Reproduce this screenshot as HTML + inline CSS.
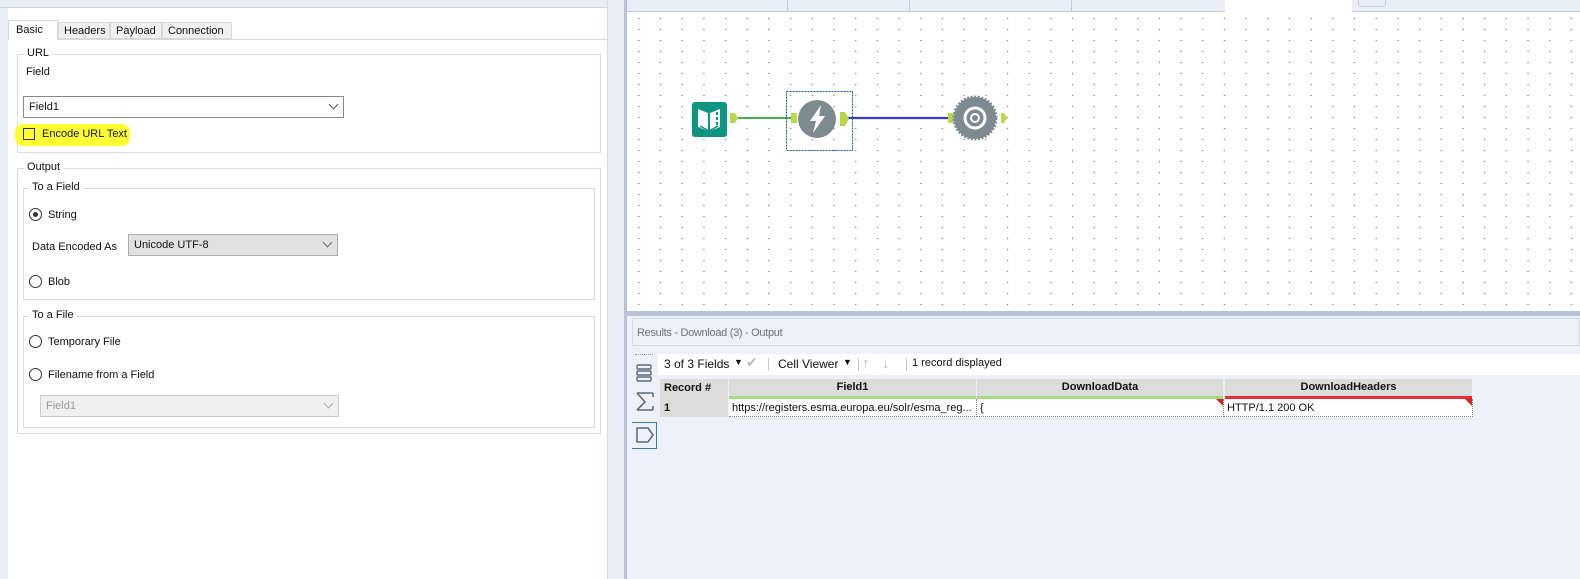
<!DOCTYPE html>
<html><head><meta charset="utf-8"><style>
*{box-sizing:border-box;margin:0;padding:0}
body{width:1580px;height:579px;overflow:hidden;background:#fff;font-family:"Liberation Sans",sans-serif;font-size:11px;color:#111;position:relative}
.abs{position:absolute}
.fs{position:absolute;border:1px solid #dcdcdc}
.lg{position:absolute;background:#fff;padding:0 3px;font-size:11px;top:-8px}
.radio{position:absolute;width:13px;height:13px;border:1px solid #333;border-radius:50%;background:#fff}
.sel{position:absolute;border:1px solid #888;background:#fff;height:22px;padding:4px 5px;font-size:11px}
.chev{position:absolute;right:6px;top:5px;width:7px;height:7px;border-right:1px solid #555;border-bottom:1px solid #555;transform:rotate(45deg)}
.th{position:absolute;top:379px;height:20px;background:#dcdcdc;font-weight:bold;text-align:center;line-height:17px}
.td{position:absolute;top:399px;height:18px;background:#fff;line-height:18px;padding-left:3px;border-bottom:1px dotted #888;border-right:1px dotted #888;white-space:nowrap;overflow:hidden}
.tri{position:absolute;right:0;top:0;width:0;height:0;border-top:7px solid #e02020;border-left:7px solid transparent}
</style></head><body>
<!-- left panel -->
<div class="abs" style="left:0;top:0;width:608px;height:8px;background:#e9edf5;border-bottom:1px solid #cfd4de"></div>
<div class="abs" style="left:0;top:8px;width:8px;height:571px;background:#e9edf5"></div>
<div class="abs" style="left:607px;top:0;width:20px;height:579px;background:#e9edf6;border-left:1px solid #d6dbe6"></div>
<div class="abs" style="left:624px;top:0;width:3px;height:579px;background:#b7c3d9"></div>
<!-- tabs -->
<div class="abs" style="left:9px;top:39px;width:599px;height:1px;background:#d8d8d8"></div>
<div class="abs" style="left:8px;top:20px;width:50px;height:20px;background:#fff;border:1px solid #d8d8d8;border-bottom:none;padding:3px 7px">Basic</div>
<div class="abs" style="left:58px;top:22px;width:52px;height:17px;background:#f0f0f0;border:1px solid #d8d8d8;padding:2px 5px">Headers</div>
<div class="abs" style="left:110px;top:22px;width:52px;height:17px;background:#f0f0f0;border:1px solid #d8d8d8;padding:2px 5px">Payload</div>
<div class="abs" style="left:162px;top:22px;width:70px;height:17px;background:#f0f0f0;border:1px solid #d8d8d8;padding:2px 5px">Connection</div>
<!-- URL -->
<div class="fs" style="left:17px;top:54px;width:584px;height:99px"><span class="lg" style="left:6px">URL</span></div>
<div class="abs" style="left:26px;top:66px">Field</div>
<div class="sel" style="left:23px;top:96px;width:321px">Field1<span class="chev" style="top:4px"></span></div>
<div class="abs" style="left:15px;top:124px;width:115px;height:22px;background:#ffff33;border-radius:8px"></div>
<div class="abs" style="left:23px;top:128px;width:12px;height:12px;border:1px solid #333"></div>
<div class="abs" style="left:42px;top:128px;font-size:11px">Encode URL Text</div>
<!-- Output -->
<div class="fs" style="left:17px;top:168px;width:584px;height:266px"><span class="lg" style="left:6px">Output</span></div>
<div class="fs" style="left:23px;top:188px;width:572px;height:112px"><span class="lg" style="left:5px">To a Field</span></div>
<div class="radio" style="left:29px;top:208px"><div style="position:absolute;left:3px;top:3px;width:5px;height:5px;border-radius:50%;background:#333"></div></div>
<div class="abs" style="left:48px;top:209px">String</div>
<div class="abs" style="left:32px;top:241px">Data Encoded As</div>
<div class="sel" style="left:128px;top:234px;width:210px;background:#e1e1e1;border-color:#adadad">Unicode UTF-8<span class="chev" style="top:4px;border-color:#666"></span></div>
<div class="radio" style="left:29px;top:275px"></div>
<div class="abs" style="left:48px;top:276px">Blob</div>
<div class="fs" style="left:23px;top:316px;width:572px;height:112px"><span class="lg" style="left:5px">To a File</span></div>
<div class="radio" style="left:29px;top:335px"></div>
<div class="abs" style="left:48px;top:336px">Temporary File</div>
<div class="radio" style="left:29px;top:368px"></div>
<div class="abs" style="left:48px;top:369px">Filename from a Field</div>
<div class="sel" style="left:40px;top:395px;width:299px;background:#f0f0f0;border-color:#ccc;color:#999">Field1<span class="chev" style="top:4px;border-color:#aaa"></span></div>
<!-- canvas top tabs -->
<div class="abs" style="left:627px;top:0;width:953px;height:12px;background:#e9edf7;border-bottom:1px solid #c6cdd9"></div>
<div class="abs" style="left:787px;top:0;width:1px;height:12px;background:#c6cdd9"></div>
<div class="abs" style="left:909px;top:0;width:1px;height:12px;background:#c6cdd9"></div>
<div class="abs" style="left:1071px;top:0;width:1px;height:12px;background:#c6cdd9"></div>
<div class="abs" style="left:1225px;top:0;width:127px;height:13px;background:#fff"></div>
<div class="abs" style="left:1358px;top:0;width:28px;height:7px;border:1px solid #c6cdd9;border-top:none;border-radius:0 0 3px 3px"></div>
<!-- canvas -->
<div class="abs" style="left:627px;top:13px;width:953px;height:299px;background-color:#fff;background-image:radial-gradient(circle,#8a8a8a 0.6px,transparent 0.9px);background-size:21.7px 11px;background-position:1px 0"></div>
<div class="abs" style="left:627px;top:311px;width:953px;height:5px;background:#b7c3d9"></div>
<!-- workflow -->
<svg class="abs" style="left:680px;top:85px" width="330" height="70">
<line x1="58" y1="33" x2="112" y2="33" stroke="#4caf50" stroke-width="2"/>
<line x1="166" y1="33" x2="268" y2="33" stroke="#3a3acc" stroke-width="2.2"/>
<rect x="12" y="17" width="35" height="35" rx="3" fill="#0f9481"/>
<path d="M18 24 L28 28 L28 46 L18 42 Z M40 24 L30 28 L30 46 L40 42 Z" fill="#fff"/>
<path d="M29 46 L20 41 M29 46 L38 41" stroke="#0f9481" stroke-width="1.5"/>
<rect x="36" y="27" width="2" height="3" fill="#0f9481"/><rect x="36" y="32" width="2" height="3" fill="#0f9481"/><rect x="36" y="37" width="2" height="3" fill="#0f9481"/>
<path d="M50 28 h5 l3 5 l-3 5 h-5 z" fill="#b8d84a"/>
<rect x="106.5" y="6.5" width="66" height="59" fill="none" stroke="#1a5fa0" stroke-dasharray="2,1"/>
<path d="M111 28 h6 v10 h-6 z" fill="#b8d84a"/>
<circle cx="137" cy="34" r="19" fill="#7d8a91"/>
<path d="M141 20 L130 36 h6 l-3 12 L145 31 h-6 z" fill="#fff"/>
<path d="M160 27 h5 l4 7 l-4 7 h-5 z" fill="#b8d84a"/>
<path d="M268 28 h6 v10 h-6 z" fill="#b8d84a"/>
<circle cx="295" cy="33" r="21" fill="#7d8a91" stroke="#7d8a91" stroke-width="3" stroke-dasharray="2,1.5"/>
<circle cx="295" cy="33" r="10" fill="none" stroke="#fff" stroke-width="3"/>
<circle cx="295" cy="33" r="4" fill="none" stroke="#fff" stroke-width="2"/>
<path d="M321 28 h3 l3 5 l-3 5 h-3 z" fill="#b8d84a"/>
</svg>
<!-- results -->
<div class="abs" style="left:627px;top:316px;width:953px;height:263px;background:#eef1f9"></div>
<div class="abs" style="left:632px;top:318px;width:948px;height:28px;border:1px solid #d4d9e4;background:#eef1f9;color:#6b7280;padding:8px 0 0 4px;letter-spacing:-0.3px">Results - Download (3) - Output</div>
<div class="abs" style="left:635px;top:354px;width:18px;border-top:1px dotted #999"></div>
<svg class="abs" style="left:632px;top:362px" width="30" height="90">
<rect x="5" y="3" width="14" height="4" rx="1" fill="none" stroke="#5a6a80" stroke-width="1.4"/>
<rect x="5" y="9" width="14" height="4" rx="1" fill="none" stroke="#5a6a80" stroke-width="1.4"/>
<rect x="5" y="15" width="14" height="4" rx="1" fill="none" stroke="#5a6a80" stroke-width="1.4"/>
<path d="M5 31 h16 M5 48 h16 M5 31 L13 40 L5 48" fill="none" stroke="#5a6a80" stroke-width="1.6"/>
<path d="M21 31 v4 M21 48 v-4" stroke="#5a6a80" stroke-width="1.6"/>
<rect x="-1.5" y="60.5" width="26" height="26" fill="none" stroke="#3a7ac0"/>
<path d="M5 66 h11 l5 7 l-5 7 h-11 z" fill="none" stroke="#5a6a80" stroke-width="1.6"/>
</svg>
<div class="abs" style="left:658px;top:354px;width:922px;height:21px;background:#fff"></div>
<div class="abs" style="left:664px;top:357px;font-size:12px">3 of 3 Fields</div>
<div class="abs" style="left:734px;top:357px;font-size:9px">▼</div>
<div class="abs" style="left:746px;top:354px;font-size:14px;color:#bbb">✔</div>
<div class="abs" style="left:768px;top:358px;width:1px;height:13px;background:#ccc"></div>
<div class="abs" style="left:778px;top:357px;font-size:12px">Cell Viewer</div>
<div class="abs" style="left:843px;top:357px;font-size:9px">▼</div>
<div class="abs" style="left:862px;top:355px;font-size:15px;color:#bbb">↑</div>
<div class="abs" style="left:882px;top:355px;font-size:15px;color:#bbb">↓</div>
<div class="abs" style="left:858px;top:358px;width:1px;height:13px;background:#ccc"></div>
<div class="abs" style="left:906px;top:358px;width:1px;height:13px;background:#ccc"></div>
<div class="abs" style="left:912px;top:357px;font-size:11px">1 record displayed</div>
<div class="abs" style="left:660px;top:379px;width:68px;height:38px;background:#dcdcdc"></div>
<div class="abs" style="left:664px;top:382px;font-weight:bold">Record #</div>
<div class="abs" style="left:664px;top:402px;font-weight:bold">1</div>
<div class="th" style="left:729px;width:247px;border-bottom:3px solid #9fdc7c">Field1</div>
<div class="th" style="left:977px;width:246px;border-bottom:3px solid #9fdc7c">DownloadData</div>
<div class="th" style="left:1225px;width:247px;border-bottom:3px solid #e03030">DownloadHeaders</div>
<div class="td" style="left:729px;width:248px">https://registers.esma.europa.eu/solr/esma_reg...</div>
<div class="td" style="left:977px;width:247px">{<span class="tri"></span></div>
<div class="td" style="left:1224px;width:249px">HTTP/1.1 200 OK<span class="tri"></span></div>
</body></html>
